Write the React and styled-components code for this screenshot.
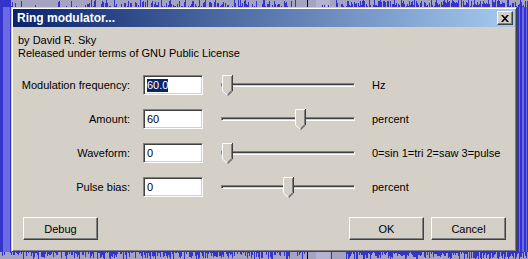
import React from "react";
import styled, { createGlobalStyle } from "styled-components";

const GlobalStyle = createGlobalStyle`
  html, body {
    margin: 0;
    padding: 0;
    background: #a4a4c0;
  }
  body {
    font-family: "Liberation Sans", Arial, sans-serif;
    font-size: 11px;
    color: #000;
  }
`;

const Desktop = styled.div`
  position: relative;
  width: 528px;
  height: 259px;
  overflow: hidden;
`;

const WaveLayer = styled.svg`
  position: absolute;
  left: 0;
  top: 0;
`;

const Dialog = styled.div`
  position: absolute;
  left: 11px;
  top: 7px;
  width: 506px;
  height: 245px;
  box-sizing: border-box;
  background: #d4d0c8;
  border: 1px solid;
  border-color: #d4d0c8 #404040 #404040 #d4d0c8;
  box-shadow: inset 1px 1px 0 #ffffff, inset -1px -1px 0 #808080;
  padding: 1px;
  display: flex;
  flex-direction: column;
`;

const TitleBar = styled.div`
  height: 18px;
  display: flex;
  align-items: center;
  justify-content: space-between;
  padding: 0 2px 0 4px;
  background: linear-gradient(to right, #0a246a, #a6caf0);
`;

const Title = styled.span`
  color: #fff;
  font-weight: bold;
  font-size: 12px;
`;

const CloseButton = styled.div`
  width: 16px;
  height: 14px;
  box-sizing: border-box;
  background: #d4d0c8;
  border: 1px solid;
  border-color: #ffffff #404040 #404040 #ffffff;
  box-shadow: inset -1px -1px 0 #808080;
  display: flex;
  align-items: center;
  justify-content: center;
`;

const Body = styled.div`
  flex: 1;
  display: flex;
  flex-direction: column;
  padding: 7px 9px 0 5px;
`;

const Credits = styled.div`
  line-height: 13px;
`;

const Rows = styled.div`
  margin-top: 8px;
  display: grid;
  grid-template-columns: 125px 78px 151px 1fr;
  grid-auto-rows: 34px;
  align-items: center;
`;

const Label = styled.div`
  text-align: right;
  padding-right: 13px;
  white-space: nowrap;
`;

const Field = styled.div`
  width: 60px;
  height: 20px;
  box-sizing: border-box;
  background: #fff;
  border: 1px solid;
  border-color: #808080 #ffffff #ffffff #808080;
  box-shadow: inset 1px 1px 0 #404040, inset -1px -1px 0 #d4d0c8;
  padding: 0 3px;
  display: flex;
  align-items: center;
  line-height: 13px;
`;

const Selected = styled.span`
  background: #0a246a;
  color: #fff;
`;

const Slider = styled.div`
  position: relative;
  width: 134px;
  height: 34px;
  display: flex;
  align-items: center;
`;

const Track = styled.div`
  width: 100%;
  height: 4px;
  margin-top: -1px;
  box-sizing: border-box;
  border: 1px solid;
  border-color: #808080 #ffffff #ffffff #808080;
  box-shadow: inset 1px 1px 0 #404040;
  background: #d4d0c8;
`;

const Thumb = styled.svg`
  position: absolute;
  top: 7px;
`;

const Unit = styled.div`
  white-space: nowrap;
`;

const ButtonRow = styled.div`
  margin-top: 13px;
  display: flex;
  align-items: center;
  padding-left: 5px;
`;

const Button = styled.div`
  width: 75px;
  height: 23px;
  box-sizing: border-box;
  border: 1px solid;
  border-color: #ffffff #404040 #404040 #ffffff;
  box-shadow: inset -1px -1px 0 #808080;
  display: flex;
  align-items: center;
  justify-content: center;
  margin-left: ${(p) => (p.$push ? "auto" : p.$gap ? "7px" : "0")};
`;

function ThumbIcon({ left }) {
  return (
    <Thumb width="11" height="21" viewBox="0 0 11 21" style={{ left }}>
      <polygon points="0,0 11,0 11,16 5.5,21 0,16" fill="#d4d0c8" />
      <polyline points="0.5,16 0.5,0.5 10,0.5" fill="none" stroke="#ffffff" />
      <polyline points="0.5,16 5.5,20.5" fill="none" stroke="#ffffff" />
      <polyline points="10.5,0 10.5,16 5.5,20.8" fill="none" stroke="#404040" />
      <polyline points="9.5,1 9.5,15.5 5.5,19.3" fill="none" stroke="#808080" />
    </Thumb>
  );
}

function rng(seed) {
  let s = seed;
  return () => {
    s = (s * 16807) % 2147483647;
    return (s - 1) / 2147483646;
  };
}

const BLUE = "#3434cc";
const LIGHT = "#6a6ae2";
const PALE = "#b4b4d2";

function density(x, band) {
  if (x >= 290 && x < 347) return 0.12;
  if (band === "top") {
    if (x < 11) return 1;
    if (x < 85) return 0.18;
    if (x < 290) return 0.55;
    return 0.8;
  }
  if (x < 10) return 0.35;
  if (x < 290) return 0.7;
  return 0.85;
}

function Waveform() {
  const r = rng(97);
  const rects = [];
  for (let x = 0; x < 528; x++) {
    if (r() < density(x, "top")) {
      const t = x < 11 ? 0 : Math.floor(r() * 7);
      rects.push(<rect key={"t" + x} x={x} y={t} width="1" height={7 - t} fill={BLUE} />);
    }
    if (r() < density(x, "bottom")) {
      const b = 252 + Math.ceil(r() * 7);
      rects.push(<rect key={"b" + x} x={x} y={252} width="1" height={b - 252} fill={BLUE} />);
    }
  }
  const side = [];
  for (let x = 517; x < 528; x++) {
    if (r() < 0.35) side.push(<rect key={"s" + x} x={x} y={7} width="1" height={245} fill={LIGHT} />);
  }
  return (
    <WaveLayer width="528" height="259" viewBox="0 0 528 259">
      <rect x="316" y="0" width="14" height="259" fill={PALE} />
      {rects}
      <rect x="0" y="7" width="11" height="245" fill={BLUE} />
      <rect x="3" y="7" width="7" height="245" fill={LIGHT} />
      <rect x="517" y="7" width="11" height="245" fill={BLUE} />
      {side}
      <rect x="307" y="0" width="1" height="259" fill="#000" />
    </WaveLayer>
  );
}

const params = [
  { label: "Modulation frequency:", value: "60.0", selected: true, pos: 1, unit: "Hz" },
  { label: "Amount:", value: "60", pos: 74, unit: "percent" },
  { label: "Waveform:", value: "0", pos: 1, unit: "0=sin 1=tri 2=saw 3=pulse" },
  { label: "Pulse bias:", value: "0", pos: 62, unit: "percent" },
];

export default function App() {
  return (
    <>
      <GlobalStyle />
      <Desktop>
        <Waveform />
        <Dialog>
          <TitleBar>
            <Title>Ring modulator...</Title>
            <CloseButton>
              <svg width="8" height="7" viewBox="0 0 8 7">
                <path d="M0 0h2l2 2.2L6 0h2L5 3.5 8 7H6L4 4.8 2 7H0l3-3.5z" fill="#000" />
              </svg>
            </CloseButton>
          </TitleBar>
          <Body>
            <Credits>
              <div>by David R. Sky</div>
              <div>Released under terms of GNU Public License</div>
            </Credits>
            <Rows>
              {params.map((p) => (
                <React.Fragment key={p.label}>
                  <Label>{p.label}</Label>
                  <Field>{p.selected ? <Selected>{p.value}</Selected> : p.value}</Field>
                  <Slider>
                    <Track />
                    <ThumbIcon left={p.pos} />
                  </Slider>
                  <Unit>{p.unit}</Unit>
                </React.Fragment>
              ))}
            </Rows>
            <ButtonRow>
              <Button>Debug</Button>
              <Button $push>OK</Button>
              <Button $gap>Cancel</Button>
            </ButtonRow>
          </Body>
        </Dialog>
      </Desktop>
    </>
  );
}
